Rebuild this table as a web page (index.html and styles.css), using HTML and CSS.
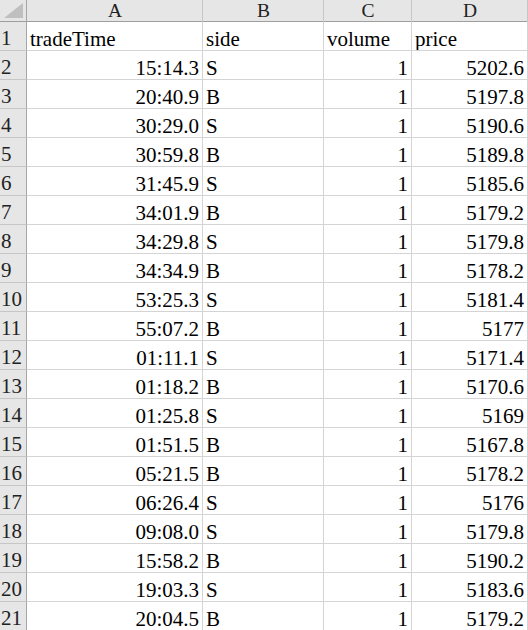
FILE: index.html
```html
<!DOCTYPE html>
<html>
<head>
<meta charset="utf-8">
<link rel="stylesheet" href="styles.css">
</head>
<body>
<div class="sheet">
  <div class="corner"><svg class="tri" width="26" height="21" viewBox="0 0 26 21"><polygon points="4,18 23,18 23,3" fill="#bfbfbf"/></svg></div>
  <div class="colh">A</div><div class="colh">B</div><div class="colh">C</div><div class="colh">D</div>

  <div class="rowh">1</div><div class="cell">tradeTime</div><div class="cell">side</div><div class="cell">volume</div><div class="cell">price</div>
  <div class="rowh">2</div><div class="cell num">15:14.3</div><div class="cell">S</div><div class="cell num">1</div><div class="cell num">5202.6</div>
  <div class="rowh">3</div><div class="cell num">20:40.9</div><div class="cell">B</div><div class="cell num">1</div><div class="cell num">5197.8</div>
  <div class="rowh">4</div><div class="cell num">30:29.0</div><div class="cell">S</div><div class="cell num">1</div><div class="cell num">5190.6</div>
  <div class="rowh">5</div><div class="cell num">30:59.8</div><div class="cell">B</div><div class="cell num">1</div><div class="cell num">5189.8</div>
  <div class="rowh">6</div><div class="cell num">31:45.9</div><div class="cell">S</div><div class="cell num">1</div><div class="cell num">5185.6</div>
  <div class="rowh">7</div><div class="cell num">34:01.9</div><div class="cell">B</div><div class="cell num">1</div><div class="cell num">5179.2</div>
  <div class="rowh">8</div><div class="cell num">34:29.8</div><div class="cell">S</div><div class="cell num">1</div><div class="cell num">5179.8</div>
  <div class="rowh">9</div><div class="cell num">34:34.9</div><div class="cell">B</div><div class="cell num">1</div><div class="cell num">5178.2</div>
  <div class="rowh">10</div><div class="cell num">53:25.3</div><div class="cell">S</div><div class="cell num">1</div><div class="cell num">5181.4</div>
  <div class="rowh">11</div><div class="cell num">55:07.2</div><div class="cell">B</div><div class="cell num">1</div><div class="cell num">5177</div>
  <div class="rowh">12</div><div class="cell num">01:11.1</div><div class="cell">S</div><div class="cell num">1</div><div class="cell num">5171.4</div>
  <div class="rowh">13</div><div class="cell num">01:18.2</div><div class="cell">B</div><div class="cell num">1</div><div class="cell num">5170.6</div>
  <div class="rowh">14</div><div class="cell num">01:25.8</div><div class="cell">S</div><div class="cell num">1</div><div class="cell num">5169</div>
  <div class="rowh">15</div><div class="cell num">01:51.5</div><div class="cell">B</div><div class="cell num">1</div><div class="cell num">5167.8</div>
  <div class="rowh">16</div><div class="cell num">05:21.5</div><div class="cell">B</div><div class="cell num">1</div><div class="cell num">5178.2</div>
  <div class="rowh">17</div><div class="cell num">06:26.4</div><div class="cell">S</div><div class="cell num">1</div><div class="cell num">5176</div>
  <div class="rowh">18</div><div class="cell num">09:08.0</div><div class="cell">S</div><div class="cell num">1</div><div class="cell num">5179.8</div>
  <div class="rowh">19</div><div class="cell num">15:58.2</div><div class="cell">B</div><div class="cell num">1</div><div class="cell num">5190.2</div>
  <div class="rowh">20</div><div class="cell num">19:03.3</div><div class="cell">S</div><div class="cell num">1</div><div class="cell num">5183.6</div>
  <div class="rowh">21</div><div class="cell num">20:04.5</div><div class="cell">B</div><div class="cell num">1</div><div class="cell num">5179.2</div>
</div>
</body>
</html>
```
FILE: styles.css
```css
html, body {
  margin: 0;
  padding: 0;
  overflow: hidden;
  background: #ffffff;
}

.sheet {
  display: grid;
  grid-template-columns: 27px 176px 121px 88px 116px;
  grid-template-rows: 22px repeat(21, 29px);
  font-family: "Liberation Serif", "Times New Roman", serif;
  font-size: 21px;
  color: #000000;
}

.sheet > div {
  box-sizing: border-box;
  white-space: nowrap;
}

.corner {
  background: #e6e6e6;
  border-right: 1px solid #a6a6a6;
  border-bottom: 1px solid #9e9e9e;
}

.tri {
  display: block;
}

.colh {
  background: #e6e6e6;
  box-shadow: inset -1px 0 #c6c6c6, inset 0 -1px #9e9e9e;
  text-align: center;
  font-size: 19.5px;
  line-height: 22px;
  color: #222222;
}

.rowh {
  background: #e6e6e6;
  border-right: 1px solid #a6a6a6;
  border-bottom: 1px solid #c6c6c6;
  padding: 4px 0 0 1px;
  line-height: 24px;
  color: #222222;
}

.cell {
  overflow: hidden;
  border-right: 1px solid #d4d4d4;
  border-bottom: 1px solid #d4d4d4;
  padding: 5px 3px 0 3px;
  line-height: 24px;
}

.num {
  text-align: right;
}
```
